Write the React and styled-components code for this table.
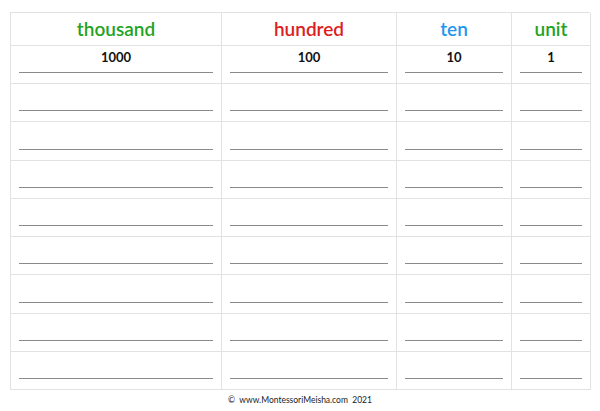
import React from 'react';
import styled, { createGlobalStyle } from 'styled-components';

const GlobalStyle = createGlobalStyle`
    body {
        margin: 0;
        background: #ffffff;
        font-family: Lato, "Open Sans", sans-serif;
    }
`;

const Page = styled.div`
    width: 600px;
    height: 411px;
    padding: 12px 10px 0;
    box-sizing: border-box;
`;

const Table = styled.div`
    display: grid;
    grid-template-columns: 211px 175px 115px 79px;
    grid-template-rows: 33px repeat(9, 1fr);
    height: 378px;
    border-top: 1px solid #e2e2e2;
    border-left: 1px solid #e2e2e2;
    box-sizing: border-box;
`;

const HeadCell = styled.div`
    display: flex;
    align-items: center;
    justify-content: center;
    border-right: 1px solid #e2e2e2;
    border-bottom: 1px solid #e2e2e2;
    font-size: 19px;
    font-weight: 600;
    color: ${props => props.color};
    padding-bottom: 1px;
`;

const Cell = styled.div`
    display: flex;
    flex-direction: column;
    justify-content: flex-end;
    align-items: center;
    padding: 0 8px 10px;
    border-right: 1px solid #e2e2e2;
    border-bottom: 1px solid #e2e2e2;
`;

const Value = styled.div`
    font-size: 13px;
    font-weight: 700;
    color: #111;
    margin-bottom: 7px;
`;

const Line = styled.div`
    align-self: stretch;
    height: 1px;
    background: #8a8a8a;
`;

const Footer = styled.div`
    text-align: center;
    font-size: 8.5px;
    color: #222;
    margin-top: 5px;
`;

const columns = [
    { name: 'thousand', color: '#1fa31f', value: '1000' },
    { name: 'hundred', color: '#dc2020', value: '100' },
    { name: 'ten', color: '#1f97ee', value: '10' },
    { name: 'unit', color: '#1fa31f', value: '1' },
];

export default function App() {
    const rows = Array.from({ length: 9 }, (_, i) => i);
    return (
        <React.Fragment>
            <GlobalStyle />
            <Page>
                <Table>
                    {columns.map(col => (
                        <HeadCell key={col.name} color={col.color}>{col.name}</HeadCell>
                    ))}
                    {rows.map(r =>
                        columns.map(col => (
                            <Cell key={r + col.name}>
                                {r === 0 && <Value>{col.value}</Value>}
                                <Line />
                            </Cell>
                        ))
                    )}
                </Table>
                <Footer>©&nbsp;&nbsp;www.MontessoriMeisha.com&nbsp;&nbsp;2021</Footer>
            </Page>
        </React.Fragment>
    );
}
